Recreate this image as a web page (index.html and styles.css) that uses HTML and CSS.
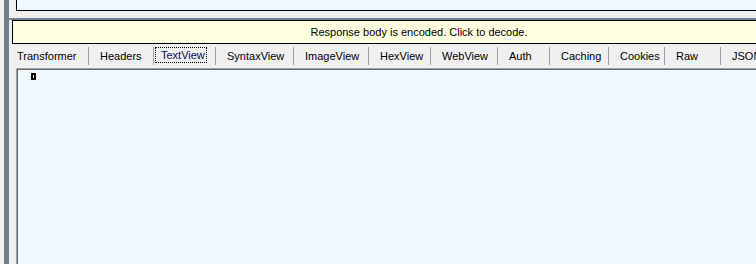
FILE: index.html
```html
<!DOCTYPE html>
<html>
<head>
<meta charset="utf-8">
<link rel="stylesheet" href="styles.css">
</head>
<body>
<div class="app">
  <div class="edge"></div>
  <div class="vsplit"></div>
  <div class="main">
    <div class="top-wrap"><div class="top-panel"></div></div>
    <div class="hsplit"></div>
    <div class="inspector">
      <div class="notice">Response body is encoded. Click to decode.</div>
      <div class="tabs">
        <div class="tab w-transformer">Transformer</div>
        <div class="tab w-headers">Headers</div>
        <div class="tab w-textview selected"><span class="focus">TextView</span></div>
        <div class="tab w-syntax">SyntaxView</div>
        <div class="tab w-image">ImageView</div>
        <div class="tab w-hex">HexView</div>
        <div class="tab w-web">WebView</div>
        <div class="tab w-auth">Auth</div>
        <div class="tab w-caching">Caching</div>
        <div class="tab w-cookies">Cookies</div>
        <div class="tab w-raw">Raw</div>
        <div class="tab w-json">JSON</div>
      </div>
      <div class="body"><span class="glyph"></span></div>
    </div>
  </div>
</div>
</body>
</html>
```
FILE: styles.css
```css
html, body {
  margin: 0;
  height: 100%;
}
body {
  background: #f0f0f0;
  font-family: "Liberation Sans", Arial, sans-serif;
  font-size: 11px;
  color: #000;
  overflow: hidden;
}
.app {
  display: flex;
  height: 264px;
}
.edge {
  width: 4px;
  flex: none;
}
.vsplit {
  width: 5px;
  flex: none;
  background: #6f7e8e;
}
.main {
  flex: 1;
  min-width: 0;
  display: flex;
  flex-direction: column;
  overflow: hidden;
}
.top-wrap {
  flex: none;
  height: 18px;
  padding-left: 7px;
  box-sizing: border-box;
}
.top-panel {
  height: 10px;
  border-left: 1px solid #000;
  border-bottom: 1px solid #000;
  background: #f0f8ff;
}
.hsplit {
  flex: none;
  height: 2px;
  background: #6f7e8e;
}
.inspector {
  flex: 1;
  min-height: 0;
  display: flex;
  flex-direction: column;
  padding-left: 3px;
}
.notice {
  flex: none;
  width: 814px;
  height: 24px;
  box-sizing: border-box;
  border: 1px solid #000;
  background: #ffffe1;
  text-align: center;
  line-height: 22px;
  white-space: nowrap;
}
.tabs {
  flex: none;
  height: 24px;
  box-sizing: border-box;
  padding-top: 3px;
  display: flex;
}
.tab {
  flex: none;
  box-sizing: border-box;
  height: 18px;
  line-height: 18px;
  padding-left: 11px;
  white-space: nowrap;
  border-left: 1px solid #a0a0a0;
}
.tab:first-child {
  border-left: 0;
  padding-left: 5px;
}
.tab.selected {
  padding-left: 1px;
}
.focus {
  display: inline-block;
  vertical-align: top;
  line-height: 14px;
  border: 1px dotted #000;
  padding: 0 1px 0 5px;
  color: #0a0a50;
}
.w-transformer { width: 76px; }
.w-headers { width: 65px; }
.w-textview { width: 62px; }
.w-syntax { width: 78px; }
.w-image { width: 75px; }
.w-hex { width: 62px; }
.w-web { width: 67px; }
.w-auth { width: 52px; }
.w-caching { width: 59px; }
.w-cookies { width: 56px; }
.w-raw { width: 56px; }
.w-json { width: 60px; }
.body {
  flex: 1;
  margin-left: 4px;
  background: #f0f8ff;
  border-top: 1px solid #a0a0a0;
  border-left: 1px solid #a0a0a0;
  box-shadow: inset 1px 1px 0 #696969;
  padding: 4px 0 0 14px;
}
.glyph {
  display: block;
  width: 1px;
  height: 3px;
  border: 2px solid #000;
}
```
